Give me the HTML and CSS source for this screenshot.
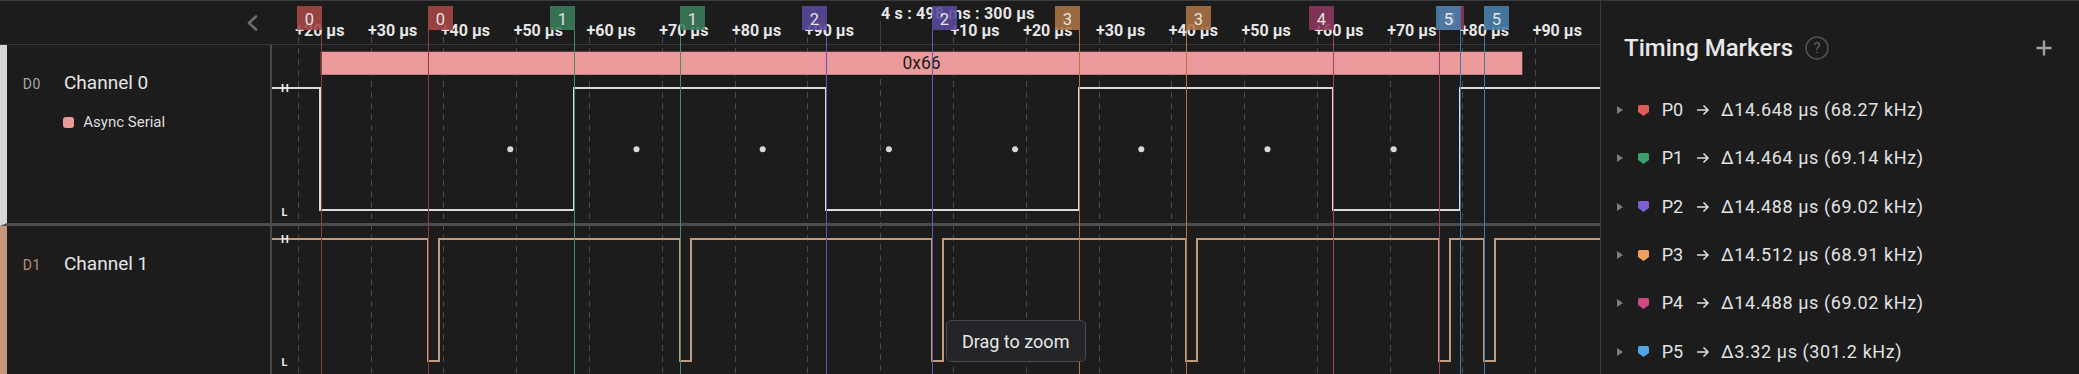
FILE: index.html
```html
<!DOCTYPE html>
<html>
<head>
<meta charset="utf-8">
<title>Logic</title>
<link rel="stylesheet" href="styles.css">
</head>
<body>
<div class="app">
  <div class="side">
    <div class="side-head">
      <svg class="chev" width="12" height="16" viewBox="0 0 12 16"><polyline points="10,1.5 3,8 10,14.5"/></svg>
    </div>
    <div class="ch ch0">
      <div class="ch-head"><span class="ch-id">D0</span><span class="ch-name">Channel 0</span></div>
      <div class="analyzer"><span class="swatch"></span><span>Async Serial</span></div>
    </div>
    <div class="ch ch1">
      <div class="ch-head"><span class="ch-id">D1</span><span class="ch-name">Channel 1</span></div>
    </div>
  </div>

  <div class="plot">
    <svg width="1328" height="373" viewBox="0 1 1328 373">
      <g class="grid">
        <line x1="26.5" y1="37" x2="26.5" y2="374"/>
        <line x1="99.5" y1="37" x2="99.5" y2="374"/>
        <line x1="171.5" y1="37" x2="171.5" y2="374"/>
        <line x1="244.5" y1="37" x2="244.5" y2="374"/>
        <line x1="317.5" y1="37" x2="317.5" y2="374"/>
        <line x1="390.5" y1="37" x2="390.5" y2="374"/>
        <line x1="463.5" y1="37" x2="463.5" y2="374"/>
        <line x1="535.5" y1="37" x2="535.5" y2="374"/>
        <line x1="608.5" y1="46" x2="608.5" y2="374"/>
        <line x1="681.5" y1="37" x2="681.5" y2="374"/>
        <line x1="754.5" y1="37" x2="754.5" y2="374"/>
        <line x1="827.5" y1="37" x2="827.5" y2="374"/>
        <line x1="899.5" y1="37" x2="899.5" y2="374"/>
        <line x1="972.5" y1="37" x2="972.5" y2="374"/>
        <line x1="1045.5" y1="37" x2="1045.5" y2="374"/>
        <line x1="1118.5" y1="37" x2="1118.5" y2="374"/>
        <line x1="1190.5" y1="37" x2="1190.5" y2="374"/>
        <line x1="1263.5" y1="37" x2="1263.5" y2="374"/>
      </g>
      <line class="major" x1="608.5" y1="21" x2="608.5" y2="44"/>
      <rect class="hline" x="0" y="44" width="1328" height="1"/>
      <rect class="sep" x="0" y="223" width="1328" height="3"/>

      <rect class="frame" x="48.5" y="51.5" width="1202" height="23.5"/>
      <text class="frame-text" x="649.5" y="68.8">0x66</text>

      <path class="wave0" d="M0,88 H48 V210 H302 V88 H554 V210 H807 V88 H1061 V210 H1188 V88 H1328"/>
      <path class="wave1" d="M0,239 H156 V361 H167 V239 H408 V361 H419 V239 H660 V361 H671 V239 H914 V361 H925 V239 H1167 V361 H1178 V239 H1212 V361 H1223 V239 H1328"/>

      <g class="dots">
        <circle cx="238.3" cy="149.3" r="3"/>
        <circle cx="364.5" cy="149.3" r="3"/>
        <circle cx="490.7" cy="149.3" r="3"/>
        <circle cx="616.9" cy="149.3" r="3"/>
        <circle cx="743.1" cy="149.3" r="3"/>
        <circle cx="869.3" cy="149.3" r="3"/>
        <circle cx="995.5" cy="149.3" r="3"/>
        <circle cx="1121.7" cy="149.3" r="3"/>
      </g>

      <g class="lvl">
        <text x="9" y="92.3">H</text>
        <text x="9.5" y="215.7">L</text>
        <text x="9" y="243">H</text>
        <text x="9.5" y="366">L</text>
      </g>

      <g class="mlines">
        <line class="m0" x1="49.5" y1="30" x2="49.5" y2="374"/>
        <line class="m0" x1="156.5" y1="30" x2="156.5" y2="374"/>
        <line class="m1" x1="302.5" y1="30" x2="302.5" y2="374"/>
        <line class="m1" x1="408.5" y1="30" x2="408.5" y2="374"/>
        <line class="m2" x1="554.5" y1="30" x2="554.5" y2="374"/>
        <line class="m2" x1="660.5" y1="30" x2="660.5" y2="374"/>
        <line class="m3" x1="807.5" y1="30" x2="807.5" y2="374"/>
        <line class="m3" x1="914.5" y1="30" x2="914.5" y2="374"/>
        <line class="m4" x1="1061.5" y1="30" x2="1061.5" y2="374"/>
        <line class="m4" x1="1167.5" y1="30" x2="1167.5" y2="374"/>
        <line class="m5" x1="1188.5" y1="30" x2="1188.5" y2="374"/>
        <line class="m5" x1="1212.5" y1="30" x2="1212.5" y2="374"/>
      </g>

      <g class="ticks">
        <text x="23.3" y="36.3">+20 µs</text>
        <text x="96.1" y="36.3">+30 µs</text>
        <text x="168.9" y="36.3">+40 µs</text>
        <text x="241.7" y="36.3">+50 µs</text>
        <text x="314.5" y="36.3">+60 µs</text>
        <text x="387.3" y="36.3">+70 µs</text>
        <text x="460" y="36.3">+80 µs</text>
        <text x="532.8" y="36.3">+90 µs</text>
        <text x="678.4" y="36.3">+10 µs</text>
        <text x="751.2" y="36.3">+20 µs</text>
        <text x="824" y="36.3">+30 µs</text>
        <text x="896.8" y="36.3">+40 µs</text>
        <text x="969.6" y="36.3">+50 µs</text>
        <text x="1042.4" y="36.3">+60 µs</text>
        <text x="1115.2" y="36.3">+70 µs</text>
        <text x="1187.9" y="36.3">+80 µs</text>
        <text x="1260.7" y="36.3">+90 µs</text>
        <text class="major-label" x="609" y="18.5">4 s : 498 ms : 300 µs</text>
      </g>

      <g class="flags">
        <g class="f0"><rect x="25" y="6" width="25" height="24"/><text x="37.5" y="25">0</text></g>
        <g class="f0"><rect x="156" y="6" width="25" height="24"/><text x="168.5" y="25">0</text></g>
        <g class="f1"><rect x="278" y="6" width="25" height="24"/><text x="290.5" y="25">1</text></g>
        <g class="f1"><rect x="408" y="6" width="25" height="24"/><text x="420.5" y="25">1</text></g>
        <g class="f2"><rect x="530" y="6" width="25" height="24"/><text x="542.5" y="25">2</text></g>
        <g class="f2"><rect x="660" y="6" width="25" height="24"/><text x="672.5" y="25">2</text></g>
        <g class="f3"><rect x="783" y="6" width="25" height="24"/><text x="795.5" y="25">3</text></g>
        <g class="f3"><rect x="914" y="6" width="25" height="24"/><text x="926.5" y="25">3</text></g>
        <g class="f4"><rect x="1037" y="6" width="25" height="24"/><text x="1049.5" y="25">4</text></g>
        <g class="f4"><rect x="1167" y="6" width="25" height="24"/><text x="1179.5" y="25">4</text></g>
        <g class="f5"><rect x="1164" y="6" width="25" height="24"/><text x="1176.5" y="25">5</text></g>
        <g class="f5"><rect x="1212" y="6" width="25" height="24"/><text x="1224.5" y="25">5</text></g>
      </g>
    </svg>
    <div class="tooltip">Drag to zoom</div>
  </div>

  <aside class="panel">
    <div class="panel-head">
      <h2>Timing Markers</h2>
      <svg class="help" width="24" height="24" viewBox="0 0 24 24"><circle cx="12" cy="12" r="11"/><text x="12" y="17.3">?</text></svg>
      <svg class="add" width="16" height="16" viewBox="0 0 16 16"><path d="M8,0.5 V15.5 M0.5,8 H15.5"/></svg>
    </div>
    <ul class="markers">
      <li>
        <svg class="caret" width="6" height="8" viewBox="0 0 6 8"><path d="M0,0 L6,4 L0,8 Z"/></svg>
        <svg class="pin p0" width="11" height="11" viewBox="0 0 11 11"><path d="M1.5,0 H9.5 Q11,0 11,1.5 V7 L5.5,11 L0,7 V1.5 Q0,0 1.5,0 Z"/></svg>
        <span class="pname">P0</span>
        <span class="arrow"><svg width="12" height="10" viewBox="0 0 12 10"><path d="M0.5,5 H11 M7,1 L11,5 L7,9"/></svg></span>
        <span class="delta">Δ14.648 µs (68.27 kHz)</span>
      </li>
      <li>
        <svg class="caret" width="6" height="8" viewBox="0 0 6 8"><path d="M0,0 L6,4 L0,8 Z"/></svg>
        <svg class="pin p1" width="11" height="11" viewBox="0 0 11 11"><path d="M1.5,0 H9.5 Q11,0 11,1.5 V7 L5.5,11 L0,7 V1.5 Q0,0 1.5,0 Z"/></svg>
        <span class="pname">P1</span>
        <span class="arrow"><svg width="12" height="10" viewBox="0 0 12 10"><path d="M0.5,5 H11 M7,1 L11,5 L7,9"/></svg></span>
        <span class="delta">Δ14.464 µs (69.14 kHz)</span>
      </li>
      <li>
        <svg class="caret" width="6" height="8" viewBox="0 0 6 8"><path d="M0,0 L6,4 L0,8 Z"/></svg>
        <svg class="pin p2" width="11" height="11" viewBox="0 0 11 11"><path d="M1.5,0 H9.5 Q11,0 11,1.5 V7 L5.5,11 L0,7 V1.5 Q0,0 1.5,0 Z"/></svg>
        <span class="pname">P2</span>
        <span class="arrow"><svg width="12" height="10" viewBox="0 0 12 10"><path d="M0.5,5 H11 M7,1 L11,5 L7,9"/></svg></span>
        <span class="delta">Δ14.488 µs (69.02 kHz)</span>
      </li>
      <li>
        <svg class="caret" width="6" height="8" viewBox="0 0 6 8"><path d="M0,0 L6,4 L0,8 Z"/></svg>
        <svg class="pin p3" width="11" height="11" viewBox="0 0 11 11"><path d="M1.5,0 H9.5 Q11,0 11,1.5 V7 L5.5,11 L0,7 V1.5 Q0,0 1.5,0 Z"/></svg>
        <span class="pname">P3</span>
        <span class="arrow"><svg width="12" height="10" viewBox="0 0 12 10"><path d="M0.5,5 H11 M7,1 L11,5 L7,9"/></svg></span>
        <span class="delta">Δ14.512 µs (68.91 kHz)</span>
      </li>
      <li>
        <svg class="caret" width="6" height="8" viewBox="0 0 6 8"><path d="M0,0 L6,4 L0,8 Z"/></svg>
        <svg class="pin p4" width="11" height="11" viewBox="0 0 11 11"><path d="M1.5,0 H9.5 Q11,0 11,1.5 V7 L5.5,11 L0,7 V1.5 Q0,0 1.5,0 Z"/></svg>
        <span class="pname">P4</span>
        <span class="arrow"><svg width="12" height="10" viewBox="0 0 12 10"><path d="M0.5,5 H11 M7,1 L11,5 L7,9"/></svg></span>
        <span class="delta">Δ14.488 µs (69.02 kHz)</span>
      </li>
      <li>
        <svg class="caret" width="6" height="8" viewBox="0 0 6 8"><path d="M0,0 L6,4 L0,8 Z"/></svg>
        <svg class="pin p5" width="11" height="11" viewBox="0 0 11 11"><path d="M1.5,0 H9.5 Q11,0 11,1.5 V7 L5.5,11 L0,7 V1.5 Q0,0 1.5,0 Z"/></svg>
        <span class="pname">P5</span>
        <span class="arrow"><svg width="12" height="10" viewBox="0 0 12 10"><path d="M0.5,5 H11 M7,1 L11,5 L7,9"/></svg></span>
        <span class="delta">Δ3.32 µs (301.2 kHz)</span>
      </li>
    </ul>
  </aside>
</div>
</body>
</html>
```

FILE: styles.css
```css
* { box-sizing: border-box; }
html, body { margin: 0; padding: 0; background: #1c1c1d; }
body {
  font-family: Roboto, "Liberation Sans", sans-serif;
  color: #e2e2e2;
  width: 2079px;
  height: 374px;
  overflow: hidden;
}
.app { display: flex; height: 374px; border-top: 1px solid #3b3b3d; }

/* left channel labels */
.side { width: 272px; flex: none; display: flex; flex-direction: column; }
.side-head {
  height: 44px;
  border-bottom: 1px solid #38383a;
  display: flex;
  align-items: center;
  justify-content: flex-end;
  padding-right: 14px;
}
.chev polyline { fill: none; stroke: #6c6c6e; stroke-width: 2.6; stroke-linecap: round; stroke-linejoin: round; }
.ch {
  border-left: 7px solid #d6d6d6;
  border-right: 2px solid #48484a;
  padding-top: 27px;
}
.ch0 { height: 181px; border-bottom: 3px solid #4e4e50; }
.ch1 { flex: 1; border-left-color: #c4977a; }
.ch-head { display: flex; align-items: baseline; line-height: 22px; padding-left: 15.7px; }
.ch-id { width: 41.3px; font-size: 14px; letter-spacing: 0.6px; color: #a6a6a6; }
.ch1 .ch-id { color: #b98f72; }
.ch-name { font-size: 19px; color: #e4e4e4; }
.analyzer {
  display: flex;
  align-items: center;
  margin-top: 18px;
  padding-left: 56.3px;
  font-size: 15px;
  line-height: 18px;
  color: #dedede;
}
.swatch { width: 11px; height: 11px; border-radius: 3px; background: #ea9a9a; margin-right: 9px; }

/* plot */
.plot { position: relative; width: 1328px; flex: none; }
.plot svg { display: block; }
.grid line { stroke: #4a4a4c; stroke-width: 1; stroke-dasharray: 6 5; }
.major { stroke: #3e3e40; stroke-width: 1; }
.hline { fill: #38383a; }
.sep { fill: #4e4e50; }
.frame { fill: #ea9a9a; stroke: rgba(0,0,0,0.35); stroke-width: 1; }
.frame-text { font: 400 17.5px Roboto, "Liberation Sans", sans-serif; fill: #1d1d1d; text-anchor: middle; }
.wave0 { fill: none; stroke: #dadada; stroke-width: 2; }
.wave1 { fill: none; stroke: #c29a7c; stroke-width: 2; }
.dots circle { fill: #d8d8d8; }
.lvl text { font: 700 11px Roboto, "Liberation Sans", sans-serif; fill: #e8e8e8; }
.mlines line { stroke-width: 1; }
.mlines .m0 { stroke: #8e3d3d; }
.mlines .m1 { stroke: #4c8a6a; }
.mlines .m2 { stroke: #6757aa; }
.mlines .m3 { stroke: #ad7848; }
.mlines .m4 { stroke: #9c4568; }
.mlines .m5 { stroke: #3f7bab; }
.ticks text { font: 700 16px Roboto, "Liberation Sans", sans-serif; fill: #e6e6e6; }
.ticks .major-label { letter-spacing: 0.2px; }
.flags g { opacity: 0.88; }
.flags text { font: 400 16.5px Roboto, "Liberation Sans", sans-serif; fill: #ffffff; text-anchor: middle; }
.f0 rect { fill: #a94747; }
.f1 rect { fill: #3c7c5b; }
.f2 rect { fill: #5a499c; }
.f3 rect { fill: #ad7445; }
.f4 rect { fill: #8d385d; }
.f5 rect { fill: #4a80ad; }

.tooltip {
  position: absolute;
  left: 673.7px;
  top: 319px;
  width: 140px;
  height: 42px;
  display: flex;
  align-items: center;
  justify-content: center;
  background: #242528;
  border: 1px solid #4a4a4e;
  border-radius: 5px;
  font-size: 18px;
  color: #e8e8e8;
}

/* right panel */
.panel { flex: 1; border-left: 1px solid #3a3a3c; padding-top: 33px; }
.panel-head { display: flex; align-items: center; height: 28px; padding: 0 27px 0 23px; }
.panel-head h2 { margin: 0; font-size: 24px; font-weight: 500; line-height: 28px; color: #e8e8e8; }
.help { margin-left: 12px; }
.help circle { fill: none; stroke: #525254; stroke-width: 1.5; }
.help text { font: 400 15px Roboto, "Liberation Sans", sans-serif; fill: #5f5f61; text-anchor: middle; }
.add { margin-left: auto; }
.add path { stroke: #a0a0a0; stroke-width: 2.4; fill: none; }
.markers { list-style: none; margin: 24px 0 0; padding: 0 0 0 16px; }
.markers li {
  display: flex;
  align-items: center;
  height: 48.33px;
  font-size: 18px;
  line-height: 22px;
  color: #e2e2e2;
}
.caret { margin-right: 15px; }
.caret path { fill: #7c7c7e; }
.pin { margin-right: 12.7px; }
.p0 path { fill: #e05a58; }
.p1 path { fill: #3d9f6f; }
.p2 path { fill: #7c5fd2; }
.p3 path { fill: #eea060; }
.p4 path { fill: #cf4a84; }
.p5 path { fill: #4ea5e2; }
.pname { width: 35px; }
.arrow { width: 24.3px; display: flex; align-items: center; }
.arrow path { fill: none; stroke: #dcdcdc; stroke-width: 1.7; stroke-linecap: round; stroke-linejoin: round; }
.delta { letter-spacing: 0.6px; }
```
